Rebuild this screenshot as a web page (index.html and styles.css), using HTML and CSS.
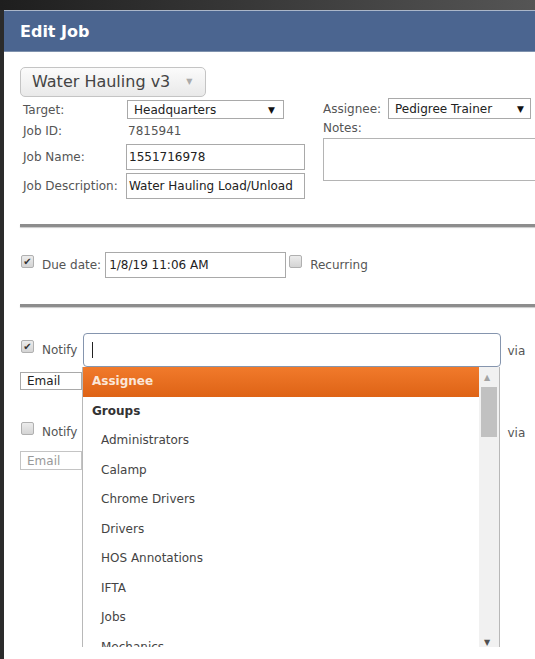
FILE: index.html
```html
<!DOCTYPE html>
<html>
<head>
<meta charset="utf-8">
<link rel="stylesheet" href="styles.css">
</head>
<body>
<div class="topbar"></div>
<div class="window">
  <div class="titlebar">Edit Job</div>
  <div class="content">
    <div class="template-btn"><span>Water Hauling v3</span><span class="tarrow">▼</span></div>
    <div class="cols">
      <div class="left">
        <div class="row r-target"><span class="lbl">Target:</span><div class="select sel-target"><span>Headquarters</span><span class="sarrow">▼</span></div></div>
        <div class="row r-id"><span class="lbl">Job ID:</span><span class="val">7815941</span></div>
        <div class="row r-name"><span class="lbl">Job Name:</span><div class="input inp-name">1551716978</div></div>
        <div class="row r-desc"><span class="lbl">Job Description:</span><div class="input inp-desc">Water Hauling Load/Unload</div></div>
      </div>
      <div class="right">
        <div class="row r-assignee"><span class="lbl">Assignee:</span><div class="select sel-assignee"><span>Pedigree Trainer</span><span class="sarrow">▼</span></div></div>
        <div class="lbl notes-lbl">Notes:</div>
        <div class="textarea"></div>
      </div>
    </div>
    <div class="sep sep1"></div>
    <div class="due-row">
      <span class="cb checked">✔</span>
      <span class="lbl">Due date:</span>
      <div class="input inp-date">1/8/19 11:06 AM</div>
      <span class="cb cb-rec"></span>
      <span class="lbl rec-lbl">Recurring</span>
    </div>
    <div class="sep sep2"></div>
    <div class="notify-block">
      <div class="notify-row n1">
        <span class="cb checked">✔</span>
        <span class="lbl">Notify</span>
        <div class="notify-input"><span class="caret"></span></div>
        <span class="lbl via">via</span>
      </div>
      <div class="select sel-email">Email</div>
      <div class="notify-row n2">
        <span class="cb"></span>
        <span class="lbl">Notify</span>
        <div class="notify-spacer"></div>
        <span class="lbl via">via</span>
      </div>
      <div class="input inp-email">Email</div>

      <div class="dropdown">
        <div class="dd-list">
          <div class="dd-item active">Assignee</div>
          <div class="dd-group">Groups</div>
          <div class="dd-item sub">Administrators</div>
          <div class="dd-item sub">Calamp</div>
          <div class="dd-item sub">Chrome Drivers</div>
          <div class="dd-item sub">Drivers</div>
          <div class="dd-item sub">HOS Annotations</div>
          <div class="dd-item sub">IFTA</div>
          <div class="dd-item sub">Jobs</div>
          <div class="dd-item sub">Mechanics</div>
        </div>
        <div class="dd-scroll">
          <span class="up">▲</span>
          <div class="thumb"></div>
          <span class="down">▼</span>
        </div>
      </div>
    </div>
  </div>
</div>
</body>
</html>
```

FILE: styles.css
```css
html, body {
  margin: 0;
  padding: 0;
  height: 100%;
  overflow: hidden;
}
body {
  background: #2b2b2b;
  font-family: "DejaVu Sans", Verdana, sans-serif;
  font-size: 12px;
  color: #555;
}
.topbar {
  height: 10px;
  background: linear-gradient(to right, #1e1e1e, #3a3a3a 50%, #555 100%);
}
.window {
  margin-left: 4px;
  background: #fff;
  height: 649px;
  position: relative;
  overflow: hidden;
}
.titlebar {
  height: 40px;
  border-top: 1px solid #aab6c9;
  border-bottom: 1px solid #7e91ad;
  background: #4b6590;
  color: #fff;
  font-weight: bold;
  font-size: 16px;
  line-height: 42px;
  padding-left: 16px;
}
.content {
  padding-left: 16px;
  position: relative;
}
.template-btn {
  margin-top: 15px;
  width: 186px;
  height: 30px;
  border: 1px solid #c4c4c4;
  border-radius: 5px;
  background: linear-gradient(#fbfbfb, #e9e9e9);
  font-size: 16px;
  color: #444;
  line-height: 28px;
  padding-left: 11px;
  box-sizing: border-box;
  display: flex;
}
.template-btn .tarrow {
  font-size: 8px;
  color: #aaa;
  margin-left: 16px;
}
.cols {
  display: flex;
}
.left {
  width: 300px;
  flex: none;
  margin-left: 3px;
  padding-top: 3px;
}
.row {
  display: flex;
  align-items: center;
}
.left .lbl {
  width: 103px;
  flex: none;
}
.select {
  border: 1px solid #a9a9a9;
  background: #fff;
  color: #222;
  display: flex;
  align-items: center;
  box-sizing: border-box;
}
.sarrow {
  font-size: 9px;
  margin-left: auto;
  color: #111;
}
.sel-target {
  width: 157px;
  height: 19px;
  padding: 0 8px 0 6px;
  margin-left: 1px;
}
.r-target { height: 19px; }
.r-id { height: 17px; margin-top: 3px; }
.r-id .val { margin-left: 2px; color: #555; }
.input {
  border: 1px solid #a9a9a9;
  background: #fff;
  color: #222;
  box-sizing: border-box;
  display: flex;
  align-items: center;
}
.inp-name, .inp-desc {
  width: 179px;
  height: 26px;
  padding-left: 2px;
}
.r-name { margin-top: 5px; }
.r-desc { margin-top: 3px; }
.right {
  flex: none;
  width: 240px;
  padding-top: 1px;
}
.r-assignee .lbl { width: 65px; flex: none; }
.sel-assignee {
  width: 143px;
  height: 21px;
  padding: 0 6px 0 6px;
}
.notes-lbl { margin-top: 1px; line-height: 16px; }
.textarea {
  margin-top: 2px;
  width: 230px;
  height: 43px;
  border: 1px solid #b4b4b4;
  box-sizing: border-box;
}
.sep {
  height: 3px;
  background: #8d8d8d;
  box-shadow: 0 1px 1px #c9c9c9;
  margin-right: -10px;
}
.sep1 { margin-top: 25px; }
.due-row {
  display: flex;
  align-items: center;
  margin-top: 25px;
  height: 26px;
}
.cb {
  width: 11px;
  height: 11px;
  border: 1px solid #b0b0b0;
  border-radius: 2px;
  background: linear-gradient(#ececec, #d4d4d4);
  box-sizing: content-box;
  font-size: 10px;
  line-height: 11px;
  text-align: center;
  color: #333;
  flex: none;
  margin-left: 1px;
  margin-top: -8px;
}
.due-row .cb + .lbl { margin-left: 8px; }
.inp-date {
  width: 181px;
  height: 26px;
  margin-left: 4px;
  padding-left: 3px;
}
.due-row .cb-rec { margin-left: 3px; }
.due-row .rec-lbl { margin-left: 8px; }
.sep2 { margin-top: 26px; }
.notify-block {
  position: relative;
  padding-top: 26px;
}
.notify-row {
  display: flex;
  align-items: center;
}
.n1 {
  height: 34px;
}
.notify-row .cb + .lbl { margin-left: 8px; }
.notify-input {
  width: 418px;
  height: 34px;
  margin-left: 6px;
  border: 1px solid #8595ae;
  border-radius: 4px;
  box-sizing: border-box;
  position: relative;
}
.caret {
  position: absolute;
  left: 8px;
  top: 8px;
  width: 1px;
  height: 16px;
  background: #222;
}
.via { margin-left: 6px; margin-top: 2px; }
.sel-email {
  width: 62px;
  height: 18px;
  margin-top: 5px;
  padding-left: 6px;
  color: #222;
}
.n2 {
  margin-top: 32px;
  height: 20px;
}
.notify-spacer { width: 418px; margin-left: 6px; }
.inp-email {
  width: 62px;
  height: 19px;
  margin-top: 9px;
  padding-left: 6px;
  color: #999;
  border-color: #c4c4c4;
}
.dropdown {
  position: absolute;
  left: 62px;
  top: 60px;
  width: 418px;
  height: 280px;
  background: #fff;
  border-left: 1px solid #b8b8b8;
  border-right: 1px solid #b8b8b8;
  box-sizing: border-box;
  display: flex;
  overflow: hidden;
}
.dd-list {
  flex: 1;
}
.dd-item, .dd-group {
  height: 29.5px;
  line-height: 29px;
  padding-left: 9px;
  color: #444;
}
.dd-item.active {
  background: linear-gradient(#f17a2b, #de6316);
  color: #fbe7d9;
  font-weight: bold;
}
.dd-group {
  font-weight: bold;
  color: #333;
}
.dd-item.sub { padding-left: 18px; }
.dd-scroll {
  width: 20px;
  background: #f1f1f1;
  position: relative;
  flex: none;
}
.dd-scroll .up, .dd-scroll .down {
  position: absolute;
  left: 5px;
  font-size: 8px;
  color: #a3a3a3;
}
.dd-scroll .up { top: 6px; }
.dd-scroll .down { bottom: 0px; color: #505050; }
.thumb {
  position: absolute;
  left: 2px;
  right: 2px;
  top: 20px;
  height: 50px;
  background: #c1c1c1;
}
```
